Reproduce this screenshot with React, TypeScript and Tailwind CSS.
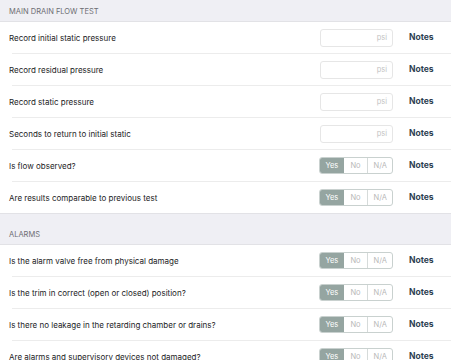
import React from 'react';

type Row = { label: string; kind: 'psi' | 'yesno' };

const sections: { title: string; rows: Row[] }[] = [
  {
    title: 'MAIN DRAIN FLOW TEST',
    rows: [
      { label: 'Record initial static pressure', kind: 'psi' },
      { label: 'Record residual pressure', kind: 'psi' },
      { label: 'Record static pressure', kind: 'psi' },
      { label: 'Seconds to return to initial static', kind: 'psi' },
      { label: 'Is flow observed?', kind: 'yesno' },
      { label: 'Are results comparable to previous test', kind: 'yesno' },
    ],
  },
  {
    title: 'ALARMS',
    rows: [
      { label: 'Is the alarm valve free from physical damage', kind: 'yesno' },
      { label: 'Is the trim in correct (open or closed) position?', kind: 'yesno' },
      { label: 'Is there no leakage in the retarding chamber or drains?', kind: 'yesno' },
      { label: 'Are alarms and supervisory devices not damaged?', kind: 'yesno' },
    ],
  },
];

function PsiInput() {
  return (
    <div className="w-[73px] h-[18px] rounded-[3px] border border-[#e6e6e6] bg-white flex items-center justify-end pr-[5px] text-[7.5px] text-[#c4c4c4]">
      psi
    </div>
  );
}

function YesNo() {
  return (
    <div className="w-[74px] h-[17px] rounded-[3px] border border-[#c9d1cf] flex overflow-hidden text-[7.5px]">
      <div className="flex-1 bg-[#95a5a1] text-white flex items-center justify-center">Yes</div>
      <div className="flex-1 border-r border-[#d6dbda] text-[#b8b8b8] flex items-center justify-center">No</div>
      <div className="flex-1 text-[#b8b8b8] flex items-center justify-center">N/A</div>
    </div>
  );
}

export default function App() {
  return (
    <div className="w-[451px] h-[360px] overflow-hidden bg-white font-['Inter',sans-serif] text-[#1c1c1e]">
      {sections.map((section, si) => (
        <div key={section.title}>
          <div
            className={`bg-[#efeff4] border-b border-[#e2e2e6] px-[9px] flex items-end pb-[4px] text-[7.5px] text-[#6d6d72] ${
              si === 0 ? 'h-[22px]' : 'h-[32px] border-t'
            }`}
          >
            {section.title}
          </div>
          {section.rows.map((row, ri) => (
            <div key={row.label}>
              <div className="h-[31px] flex items-center pl-[9px] pr-[17px]">
                <span className="flex-1 text-[8px]">{row.label}</span>
                {row.kind === 'psi' ? <PsiInput /> : <YesNo />}
                <span className="ml-[16px] w-[25px] text-[8.5px] font-bold text-[#2c3e50]">Notes</span>
              </div>
              {ri < section.rows.length - 1 && <div className="h-px ml-[12px] bg-[#ececec]" />}
            </div>
          ))}
        </div>
      ))}
    </div>
  );
}
